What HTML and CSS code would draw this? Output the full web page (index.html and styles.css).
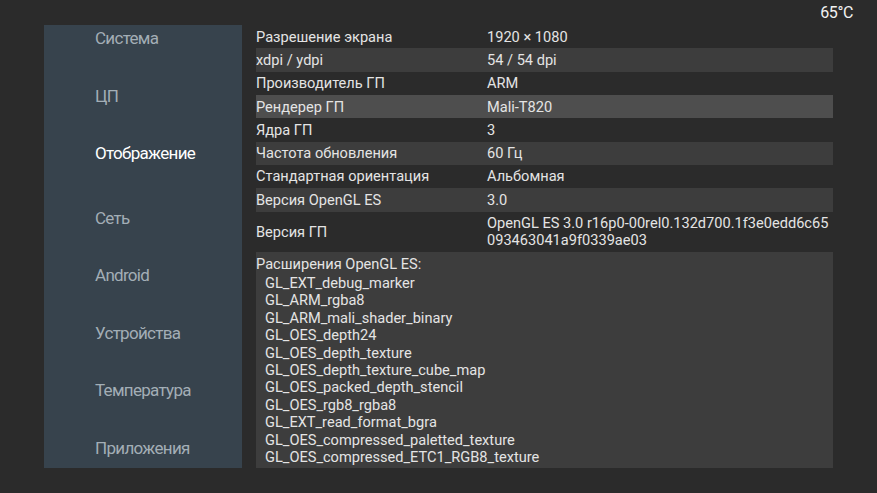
FILE: index.html
```html
<!DOCTYPE html>
<html lang="ru">
<head>
<meta charset="utf-8">
<link rel="stylesheet" href="styles.css">
</head>
<body>
<div class="temp">65°C</div>
<div class="screen">
  <nav class="sidebar">
    <div class="nav-item">Система</div>
    <div class="nav-item">ЦП</div>
    <div class="nav-item active">Отображение</div>
    <div class="nav-item">Сеть</div>
    <div class="nav-item">Android</div>
    <div class="nav-item">Устройства</div>
    <div class="nav-item">Температура</div>
    <div class="nav-item">Приложения</div>
  </nav>
  <main class="table">
    <div class="row"><div class="label">Разрешение экрана</div><div class="value">1920 × 1080</div></div>
    <div class="row alt"><div class="label">xdpi / ydpi</div><div class="value">54 / 54 dpi</div></div>
    <div class="row"><div class="label">Производитель ГП</div><div class="value">ARM</div></div>
    <div class="row focus"><div class="label">Рендерер ГП</div><div class="value">Mali-T820</div></div>
    <div class="row"><div class="label">Ядра ГП</div><div class="value">3</div></div>
    <div class="row alt"><div class="label">Частота обновления</div><div class="value">60 Гц</div></div>
    <div class="row"><div class="label">Стандартная ориентация</div><div class="value">Альбомная</div></div>
    <div class="row alt"><div class="label">Версия OpenGL ES</div><div class="value">3.0</div></div>
    <div class="row tall"><div class="label">Версия ГП</div><div class="value">OpenGL ES 3.0 r16p0-00rel0.132d700.1f3e0edd6c65<br>093463041a9f0339ae03</div></div>
    <div class="row alt ext">
      <div class="ext-title">Расширения OpenGL ES:</div>
      <ul class="ext-list">
        <li>GL_EXT_debug_marker</li>
        <li>GL_ARM_rgba8</li>
        <li>GL_ARM_mali_shader_binary</li>
        <li>GL_OES_depth24</li>
        <li>GL_OES_depth_texture</li>
        <li>GL_OES_depth_texture_cube_map</li>
        <li>GL_OES_packed_depth_stencil</li>
        <li>GL_OES_rgb8_rgba8</li>
        <li>GL_EXT_read_format_bgra</li>
        <li>GL_OES_compressed_paletted_texture</li>
        <li>GL_OES_compressed_ETC1_RGB8_texture</li>
      </ul>
    </div>
  </main>
</div>
</body>
</html>
```

FILE: styles.css
```css
html, body {
  margin: 0;
  padding: 0;
}
body {
  width: 877px;
  height: 493px;
  background: #2b2b2b;
  font-family: Roboto, "Liberation Sans", sans-serif;
  overflow: hidden;
  position: relative;
}
.temp {
  position: absolute;
  top: 3px;
  right: 24px;
  color: #f2f2f2;
  font-size: 16px;
  line-height: 20px;
  letter-spacing: -0.4px;
}
.screen {
  display: flex;
  gap: 14px;
  padding: 25px 0 0 44px;
}
.sidebar {
  width: 198px;
  height: 443px;
  background: #37434d;
  box-sizing: border-box;
  padding-left: 51px;
  display: flex;
  flex-direction: column;
}
.nav-item {
  height: 57.5px;
  flex: none;
  font-size: 17px;
  line-height: 26px;
  color: #a3aeb6;
  letter-spacing: -0.7px;
}
.nav-item.active {
  color: #ffffff;
  margin-bottom: 7px;
}
.table {
  width: 577px;
  display: flex;
  flex-direction: column;
  color: #e4e4e4;
  font-size: 14.6px;
  line-height: 17.33px;
}
.row {
  display: flex;
  padding: 3.6px 0 2.4px;
}
.row.alt {
  background: #3d3d3d;
}
.row.focus {
  background: #4e4e4e;
}
.label {
  width: 231px;
  flex: none;
}
.row.tall .label {
  align-self: center;
}
.value {
  flex: 1;
}
.row.ext {
  flex-direction: column;
  height: 216px;
  box-sizing: border-box;
  padding-top: 4px;
}
.ext-list {
  list-style: none;
  margin: 1.5px 0 0;
  padding: 0 0 0 9px;
  line-height: 17.4px;
}
```
